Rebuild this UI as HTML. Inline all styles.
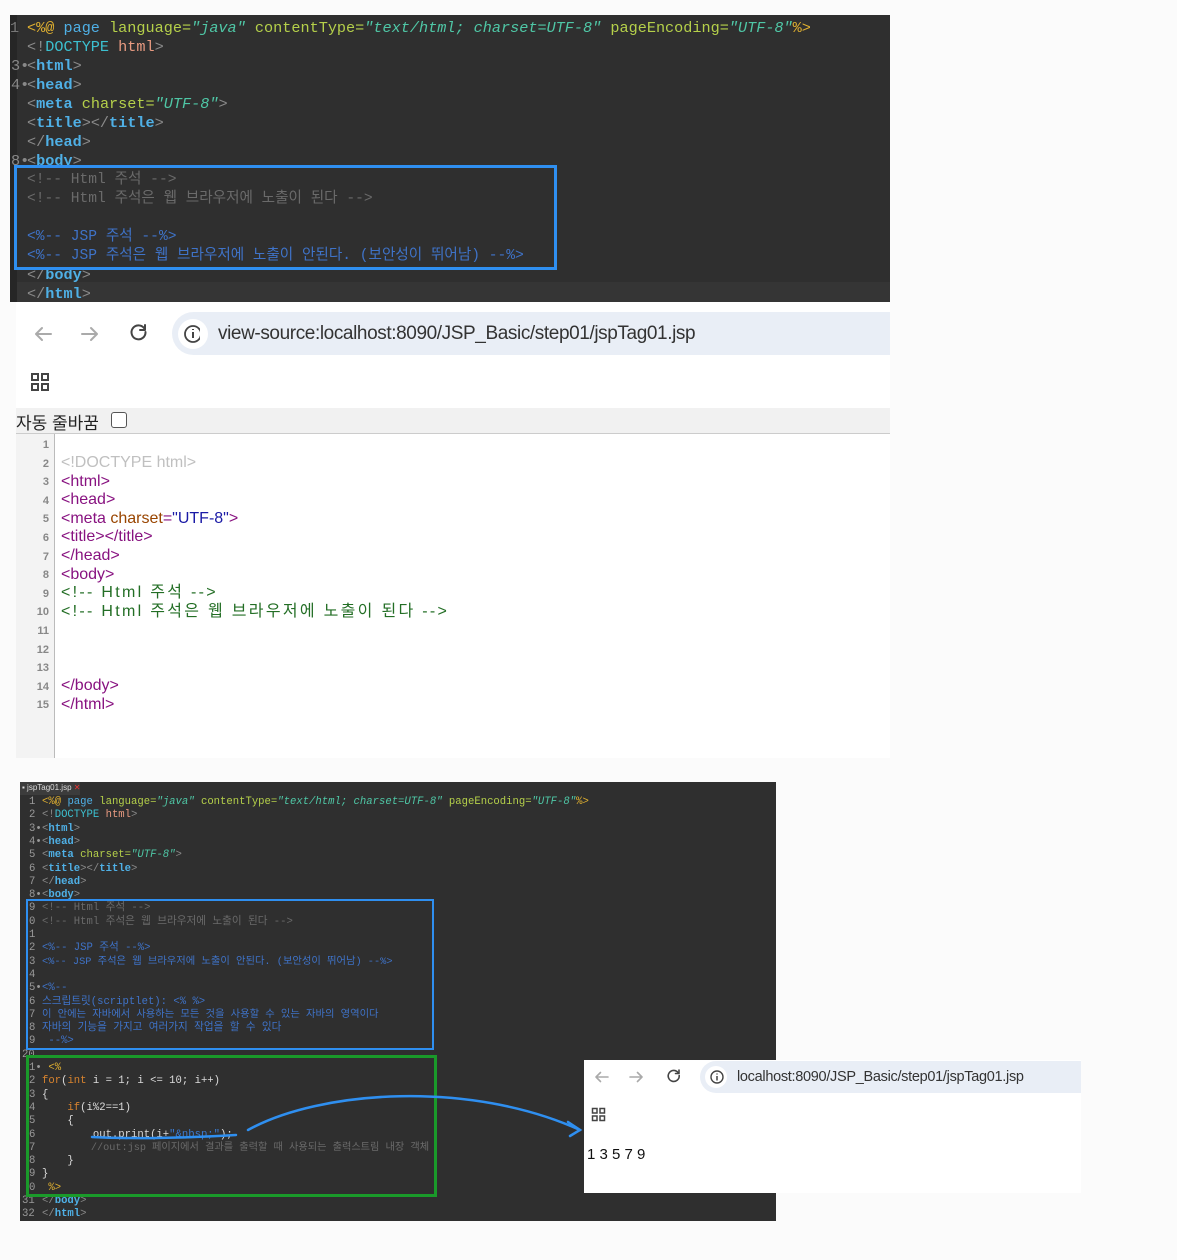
<!DOCTYPE html>
<html><head><meta charset="utf-8">
<style>
*{margin:0;padding:0;box-sizing:border-box}
body{width:1177px;height:1260px;background:#fbfbfb;position:relative;overflow:hidden;font-family:"Liberation Sans","Noto Sans CJK KR",sans-serif}
.abs{position:absolute}
.ed{background:#2f2f2f}
.mono{font-family:"Liberation Mono","Noto Sans CJK KR",monospace;white-space:pre}
.l1 div{position:absolute;left:27px;height:19px;line-height:19px;font-size:15.2px}
.g{color:#8a8a8a}.tn{color:#4fb0e6;font-weight:bold}.an{color:#b5d04a}.av{color:#4fc7a6;font-style:italic}
.dt{color:#3cc0d0}.pk{color:#e89a80}.cm{color:#6a6a6a}.jc{color:#3f73c8}.kw{color:#d8832e}.w{color:#dcdcdc}.jd{color:#e0b030}
.ln{color:#9a9a9a}
.l3 div{position:absolute;height:13.3px;line-height:13.3px;font-size:10.6px}
.src div{position:absolute;left:61px;height:19px;line-height:19px;font-size:16px;font-family:"Liberation Sans Narrow","Liberation Sans","Noto Sans CJK KR",sans-serif;white-space:pre}
.num div{position:absolute;right:0;width:36px;text-align:right;font-size:11px;color:#888;height:19px;line-height:19px;font-weight:bold}
.p{color:#881280}.o{color:#994500}.b{color:#1a1aa6}.c{color:#236e25;letter-spacing:2.3px}.d{color:#c0c0c0}
.kr{font-size:14.6px!important}
</style></head><body>

<!-- top editor -->
<div class="abs ed" style="left:10px;top:15px;width:880px;height:287px"></div>
<div class="abs" style="left:10px;top:15px;width:7px;height:287px;background:#262626"></div>
<div class="abs" style="left:17px;top:282px;width:873px;height:20px;background:#353535"></div>
<div class="abs mono l1" style="left:0;top:17px;width:890px;height:287px">
<div style="left:10px;top:2px;color:#777">1</div>
<div style="top:2px"><span class="jd">&lt;%@</span> <span class="tn" style="font-weight:normal">page</span> <span class="an">language=</span><span class="av">"java"</span> <span class="an">contentType=</span><span class="av">"text/html; charset=UTF-8"</span> <span class="an">pageEncoding=</span><span class="av">"UTF-8"</span><span class="jd">%&gt;</span></div>
<div style="top:21px"><span class="g">&lt;!</span><span class="dt">DOCTYPE</span> <span class="pk">html</span><span class="g">&gt;</span></div>
<div style="top:40px"><span class="g">&lt;</span><span class="tn">html</span><span class="g">&gt;</span></div>
<div style="top:59px"><span class="g">&lt;</span><span class="tn">head</span><span class="g">&gt;</span></div>
<div style="top:78px"><span class="g">&lt;</span><span class="tn">meta</span> <span class="an">charset=</span><span class="av">"UTF-8"</span><span class="g">&gt;</span></div>
<div style="top:97px"><span class="g">&lt;</span><span class="tn">title</span><span class="g">&gt;&lt;/</span><span class="tn">title</span><span class="g">&gt;</span></div>
<div style="top:116px"><span class="g">&lt;/</span><span class="tn">head</span><span class="g">&gt;</span></div>
<div style="top:135px"><span class="g">&lt;</span><span class="tn">body</span><span class="g">&gt;</span></div>
<div style="top:154px" class="cm kr">&lt;!-- Html 주석 --&gt;</div>
<div style="top:173px" class="cm kr">&lt;!-- Html 주석은 웹 브라우저에 노출이 된다 --&gt;</div>
<div style="top:211px" class="jc kr">&lt;%-- JSP 주석 --%&gt;</div>
<div style="top:230px" class="jc kr">&lt;%-- JSP 주석은 웹 브라우저에 노출이 안된다. (보안성이 뛰어남) --%&gt;</div>
<div style="top:249px"><span class="g">&lt;/</span><span class="tn">body</span><span class="g">&gt;</span></div>
<div style="top:268px"><span class="g">&lt;/</span><span class="tn">html</span><span class="g">&gt;</span></div>
<div style="left:11px;top:40px;color:#888">3•</div><div style="left:11px;top:59px;color:#888">4•</div><div style="left:11px;top:135px;color:#888">8•</div>
</div>
<div class="abs" style="left:14px;top:165px;width:543px;height:105px;border:3px solid #2f8ff0"></div>

<!-- browser view-source -->
<div class="abs" style="left:16px;top:302px;width:874px;height:456px;background:#fff"></div>
<div class="abs" style="left:172px;top:312px;width:718px;height:43px;background:#e9eef6;border-radius:22px 0 0 22px"></div>
<div class="abs" style="left:178px;top:319px;width:30px;height:30px;border-radius:50%;background:#fff"></div>
<svg class="abs" style="left:30px;top:320px" width="170" height="28" viewBox="0 0 170 28">
<g fill="none" stroke-width="2" stroke-linecap="round" stroke-linejoin="round">
<path d="M21 14H6M12 8l-6 6 6 6" stroke="#aaa"/>
<path d="M52 14h15M61 8l6 6-6 6" stroke="#aaa"/>
<path d="M114 8a7 7 0 1 0 1.5 4" stroke="#444"/><path d="M115 5v5h-5" stroke="#444"/>
<circle cx="163" cy="14" r="8" stroke="#444" stroke-width="1.8"/>
</g><path d="M163 12v6M163 9v1" stroke="#444" stroke-width="2"/></svg>
<div class="abs" style="left:218px;top:323px;font-size:19px;color:#333;letter-spacing:-0.4px">view-source:localhost:8090/JSP_Basic/step01/jspTag01.jsp</div>
<svg class="abs" style="left:30px;top:372px" width="20" height="20"><g fill="none" stroke="#444" stroke-width="2"><rect x="2" y="2" width="6" height="6"/><rect x="12" y="2" width="6" height="6"/><rect x="2" y="12" width="6" height="6"/><rect x="12" y="12" width="6" height="6"/></g></svg>
<div class="abs" style="left:16px;top:408px;width:874px;height:26px;background:#f1f1f1;border-bottom:1px solid #ccc"></div>
<div class="abs" style="left:16px;top:409px;font-size:17px;color:#222">자동 줄바꿈</div>
<div class="abs" style="left:111px;top:412px;width:16px;height:16px;border:1.5px solid #555;border-radius:3px;background:#fff"></div>
<div class="abs" style="left:16px;top:434px;width:39px;height:324px;background:#f3f3f3;border-right:1px solid #bbb"></div>
<div class="abs num" style="left:16px;top:436px;width:33px;height:300px">
<div style="top:0">1</div><div style="top:18.6px">2</div><div style="top:37.2px">3</div><div style="top:55.8px">4</div><div style="top:74.4px">5</div><div style="top:93px">6</div><div style="top:111.6px">7</div><div style="top:130.2px">8</div><div style="top:148.8px">9</div><div style="top:167.4px">10</div><div style="top:186px">11</div><div style="top:204.6px">12</div><div style="top:223.2px">13</div><div style="top:241.8px">14</div><div style="top:260.4px">15</div>
</div>
<div class="abs src" style="left:0;top:453px;width:890px;height:280px">
<div style="top:0" class="d">&lt;!DOCTYPE html&gt;</div>
<div style="top:18.6px" class="p">&lt;html&gt;</div>
<div style="top:37.2px" class="p">&lt;head&gt;</div>
<div style="top:55.8px"><span class="p">&lt;meta </span><span class="o">charset</span><span class="p">=</span><span class="b">"UTF-8"</span><span class="p">&gt;</span></div>
<div style="top:74.4px" class="p">&lt;title&gt;&lt;/title&gt;</div>
<div style="top:93px" class="p">&lt;/head&gt;</div>
<div style="top:111.6px" class="p">&lt;body&gt;</div>
<div style="top:130.2px" class="c">&lt;!-- Html 주석 --&gt;</div>
<div style="top:148.8px" class="c">&lt;!-- Html 주석은 웹 브라우저에 노출이 된다 --&gt;</div>
<div style="top:223.2px" class="p">&lt;/body&gt;</div>
<div style="top:241.8px" class="p">&lt;/html&gt;</div>
</div>

<!-- bottom editor -->
<div class="abs ed" style="left:20px;top:782px;width:756px;height:439px"></div>
<div class="abs" style="left:20px;top:782px;width:60px;height:13px;background:#3c3c3c"></div>
<div class="abs" style="left:22px;top:783px;font-size:8px;color:#ddd">▪ jspTag01.jsp <span style="color:#e33">✕</span></div>
<div class="abs mono l3" style="left:0;top:796px;width:776px;height:430px">
<div style="left:29px;top:0" class="ln">1</div><div style="left:42px;top:0"><span class="jd">&lt;%@</span> <span class="tn" style="font-weight:normal">page</span> <span class="an">language=</span><span class="av">"java"</span> <span class="an">contentType=</span><span class="av">"text/html; charset=UTF-8"</span> <span class="an">pageEncoding=</span><span class="av">"UTF-8"</span><span class="jd">%&gt;</span></div>
<div style="left:29px;top:13.3px" class="ln">2</div><div style="left:42px;top:13.3px"><span class="g">&lt;!</span><span class="dt">DOCTYPE</span> <span class="pk">html</span><span class="g">&gt;</span></div>
<div style="left:29px;top:26.6px" class="ln">3•</div><div style="left:42px;top:26.6px"><span class="g">&lt;</span><span class="tn">html</span><span class="g">&gt;</span></div>
<div style="left:29px;top:39.9px" class="ln">4•</div><div style="left:42px;top:39.9px"><span class="g">&lt;</span><span class="tn">head</span><span class="g">&gt;</span></div>
<div style="left:29px;top:53.2px" class="ln">5</div><div style="left:42px;top:53.2px"><span class="g">&lt;</span><span class="tn">meta</span> <span class="an">charset=</span><span class="av">"UTF-8"</span><span class="g">&gt;</span></div>
<div style="left:29px;top:66.5px" class="ln">6</div><div style="left:42px;top:66.5px"><span class="g">&lt;</span><span class="tn">title</span><span class="g">&gt;&lt;/</span><span class="tn">title</span><span class="g">&gt;</span></div>
<div style="left:29px;top:79.8px" class="ln">7</div><div style="left:42px;top:79.8px"><span class="g">&lt;/</span><span class="tn">head</span><span class="g">&gt;</span></div>
<div style="left:29px;top:93.1px" class="ln">8•</div><div style="left:42px;top:93.1px"><span class="g">&lt;</span><span class="tn">body</span><span class="g">&gt;</span></div>
<div style="left:29px;top:106.4px" class="ln">9</div><div style="left:42px;top:106.4px" class="cm">&lt;!-- Html 주석 --&gt;</div>
<div style="left:29px;top:119.7px" class="ln">0</div><div style="left:42px;top:119.7px" class="cm">&lt;!-- Html 주석은 웹 브라우저에 노출이 된다 --&gt;</div>
<div style="left:29px;top:133px" class="ln">1</div>
<div style="left:29px;top:146.3px" class="ln">2</div><div style="left:42px;top:146.3px" class="jc">&lt;%-- JSP 주석 --%&gt;</div>
<div style="left:29px;top:159.6px" class="ln">3</div><div style="left:42px;top:159.6px;font-size:10.3px" class="jc">&lt;%-- JSP 주석은 웹 브라우저에 노출이 안된다. (보안성이 뛰어남) --%&gt;</div>
<div style="left:29px;top:172.9px" class="ln">4</div>
<div style="left:29px;top:186.2px" class="ln">5•</div><div style="left:42px;top:186.2px" class="jc">&lt;%--</div>
<div style="left:29px;top:199.5px" class="ln">6</div><div style="left:42px;top:199.5px" class="jc">스크립트릿(scriptlet): &lt;% %&gt;</div>
<div style="left:29px;top:212.8px" class="ln">7</div><div style="left:42px;top:212.8px;font-size:10.3px" class="jc">이 안에는 자바에서 사용하는 모든 것을 사용할 수 있는 자바의 영역이다</div>
<div style="left:29px;top:226.1px" class="ln">8</div><div style="left:42px;top:226.1px" class="jc">자바의 기능을 가지고 여러가지 작업을 할 수 있다</div>
<div style="left:29px;top:239.4px" class="ln">9</div><div style="left:42px;top:239.4px" class="jc"> --%&gt;</div>
<div style="left:22px;top:252.7px" class="ln">20</div>
<div style="left:29px;top:266px" class="ln">1•</div><div style="left:42px;top:266px" class="jd"> &lt;%</div>
<div style="left:29px;top:279.3px" class="ln">2</div><div style="left:42px;top:279.3px"><span class="kw">for</span><span class="w">(</span><span class="kw">int</span><span class="w"> i = 1; i &lt;= 10; i++)</span></div>
<div style="left:29px;top:292.6px" class="ln">3</div><div style="left:42px;top:292.6px" class="w">{</div>
<div style="left:29px;top:305.9px" class="ln">4</div><div style="left:42px;top:305.9px"><span class="kw">    if</span><span class="w">(i%2==1)</span></div>
<div style="left:29px;top:319.2px" class="ln">5</div><div style="left:42px;top:319.2px" class="w">    {</div>
<div style="left:29px;top:332.5px" class="ln">6</div><div style="left:42px;top:332.5px"><span class="w">        out.print(i+</span><span style="color:#3a7ad0">"&amp;nbsp;"</span><span class="w">);</span></div>
<div style="left:29px;top:345.8px" class="ln">7</div><div style="left:42px;top:345.8px;font-size:10.2px" class="cm">        //out:jsp 페이지에서 결과를 출력할 때 사용되는 출력스트림 내장 객체</div>
<div style="left:29px;top:359.1px" class="ln">8</div><div style="left:42px;top:359.1px" class="w">    }</div>
<div style="left:29px;top:372.4px" class="ln">9</div><div style="left:42px;top:372.4px" class="w">}</div>
<div style="left:29px;top:385.7px" class="ln">0</div><div style="left:42px;top:385.7px" class="jd"> %&gt;</div>
<div style="left:22px;top:399px" class="ln">31</div><div style="left:42px;top:399px"><span class="g">&lt;/</span><span class="tn">body</span><span class="g">&gt;</span></div>
<div style="left:22px;top:412.3px" class="ln">32</div><div style="left:42px;top:412.3px"><span class="g">&lt;/</span><span class="tn">html</span><span class="g">&gt;</span></div>
</div>
<div class="abs" style="left:26px;top:899px;width:408px;height:151px;border:2.5px solid #2f8ff0"></div>
<div class="abs" style="left:26px;top:1055px;width:411px;height:142px;border:3px solid #1a9a2a"></div>

<!-- right browser -->
<div class="abs" style="left:584px;top:1060px;width:497px;height:133px;background:#fff"></div>
<div class="abs" style="left:700px;top:1061px;width:381px;height:32px;background:#e9eef6;border-radius:16px 0 0 16px"></div>
<div class="abs" style="left:705px;top:1066px;width:22px;height:22px;border-radius:50%;background:#fff"></div>
<svg class="abs" style="left:590px;top:1066px" width="140" height="22" viewBox="0 0 140 22">
<g fill="none" stroke-width="1.6" stroke-linecap="round" stroke-linejoin="round">
<path d="M18 11H6M10.5 6.5L6 11l4.5 4.5" stroke="#aaa"/>
<path d="M40 11h12M47.5 6.5L52 11l-4.5 4.5" stroke="#aaa"/>
<path d="M88 6.5a5.5 5.5 0 1 0 1.2 3" stroke="#444"/><path d="M89 4v3.5h-3.5" stroke="#444"/>
<circle cx="127" cy="11" r="6" stroke="#444" stroke-width="1.4"/>
</g><path d="M127 10v4.5M127 7.5v1" stroke="#444" stroke-width="1.5"/></svg>
<div class="abs" style="left:737px;top:1069px;font-size:14.5px;color:#333;letter-spacing:-0.3px">localhost:8090/JSP_Basic/step01/jspTag01.jsp</div>
<svg class="abs" style="left:591px;top:1107px" width="15" height="15"><g fill="none" stroke="#444" stroke-width="1.5"><rect x="1.5" y="1.5" width="4.5" height="4.5"/><rect x="9" y="1.5" width="4.5" height="4.5"/><rect x="1.5" y="9" width="4.5" height="4.5"/><rect x="9" y="9" width="4.5" height="4.5"/></g></svg>
<div class="abs" style="left:587px;top:1146px;font-size:15px;color:#111">1 3 5 7 9</div>

<!-- arrow -->
<svg class="abs" style="left:0;top:0" width="1177" height="1260">
<g fill="none" stroke="#2f8ff0" stroke-width="2.5" stroke-linecap="round">
<path d="M92 1137 Q150 1140 236 1135"/>
<path d="M248 1130 C320 1090 470 1080 580 1130"/>
<path d="M568 1122 L580 1130 L570 1136"/>
</g></svg>
</body></html>
